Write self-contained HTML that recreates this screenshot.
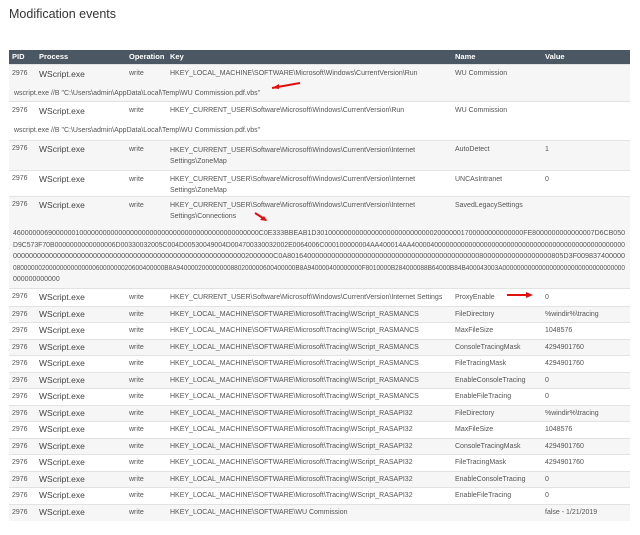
<!DOCTYPE html><html><head><style>
body{margin:0;background:#fff;font-family:"Liberation Sans",Arial,sans-serif;color:#555;width:640px;height:535px;overflow:hidden;position:relative}
h1{position:absolute;left:9px;top:7px;margin:0;font-size:12.5px;font-weight:normal;color:#333}
.hd{position:absolute;left:9px;top:50px;width:621px;height:14px;background:#4b5863;color:#fff;font-size:7.5px;font-weight:bold}
.r{position:absolute;left:9px;width:621px;border-top:1px solid #e2e2e2;font-size:7px}
.g{background:#f6f6f6}
.c{position:absolute;white-space:nowrap;line-height:16px}
.p{font-size:8.5px;color:#444}
.sub{position:absolute;left:5px;font-size:7px;line-height:11px;white-space:nowrap}
.hex{position:absolute;left:4px;top:31px;width:614px;font-size:7px;line-height:11.6px}
.hex div{white-space:nowrap;height:11.6px}
.hex span{display:inline-block;transform-origin:0 0}
</style></head><body>
<h1>Modification events</h1>
<div class="hd"><span class="c" style="left:3px;line-height:14px">PID</span><span class="c" style="left:30px;line-height:14px">Process</span><span class="c" style="left:120px;line-height:14px">Operation</span><span class="c" style="left:161px;line-height:14px">Key</span><span class="c" style="left:446px;line-height:14px">Name</span><span class="c" style="left:536px;line-height:14px">Value</span></div>

<div class="r g" style="top:64px;height:37px"><span class="c" style="left:3px;top:1px">2976</span><span class="c p" style="left:30px;top:1px">WScript.exe</span><span class="c" style="left:120px;top:1px">write</span><span class="c" style="left:161px;top:1px">HKEY_LOCAL_MACHINE\SOFTWARE\Microsoft\Windows\CurrentVersion\Run</span><span class="c" style="left:446px;top:1px">WU Commission</span><span class="sub" style="top:23px">wscript.exe //B "C:\Users\admin\AppData\Local\Temp\WU Commission.pdf.vbs"</span></div>
<svg style="position:absolute;left:270px;top:80px" width="32" height="10"><path d="M2 8 L30 3" stroke="#e01010" stroke-width="2"/><path d="M2 8 L9 4 L9 9Z" fill="#e01010"/></svg>

<div class="r" style="top:101px;height:39px"><span class="c" style="left:3px;top:1px">2976</span><span class="c p" style="left:30px;top:1px">WScript.exe</span><span class="c" style="left:120px;top:1px">write</span><span class="c" style="left:161px;top:1px">HKEY_CURRENT_USER\Software\Microsoft\Windows\CurrentVersion\Run</span><span class="c" style="left:446px;top:1px">WU Commission</span><span class="sub" style="top:23px">wscript.exe //B "C:\Users\admin\AppData\Local\Temp\WU Commission.pdf.vbs"</span></div>

<div class="r g" style="top:140px;height:30px"><span class="c" style="left:3px;top:0">2976</span><span class="c p" style="left:30px;top:0">WScript.exe</span><span class="c" style="left:120px;top:1px">write</span><span class="sub" style="left:161px;top:4px">HKEY_CURRENT_USER\Software\Microsoft\Windows\CurrentVersion\Internet<br>Settings\ZoneMap</span><span class="c" style="left:446px;top:1px">AutoDetect</span><span class="c" style="left:536px;top:1px">1</span></div>

<div class="r" style="top:170px;height:26px"><span class="c" style="left:3px;top:0">2976</span><span class="c p" style="left:30px;top:0">WScript.exe</span><span class="c" style="left:120px;top:1px">write</span><span class="sub" style="left:161px;top:3px">HKEY_CURRENT_USER\Software\Microsoft\Windows\CurrentVersion\Internet<br>Settings\ZoneMap</span><span class="c" style="left:446px;top:1px">UNCAsIntranet</span><span class="c" style="left:536px;top:1px">0</span></div>

<div class="r g" style="top:196px;height:92px"><span class="c" style="left:3px;top:0">2976</span><span class="c p" style="left:30px;top:0">WScript.exe</span><span class="c" style="left:120px;top:1px">write</span><span class="sub" style="left:161px;top:3px">HKEY_CURRENT_USER\Software\Microsoft\Windows\CurrentVersion\Internet<br>Settings\Connections</span><span class="c" style="left:446px;top:1px">SavedLegacySettings</span>
<div class="hex" id="hex"></div></div>
<svg style="position:absolute;left:253px;top:211px" width="16" height="12"><path d="M2 2 L13 9" stroke="#e01010" stroke-width="2"/><path d="M14 10 L7 9 L11 5Z" fill="#e01010"/></svg>

<div class="r" style="top:288px;height:18px"><span class="c" style="left:3px;top:0">2976</span><span class="c p" style="left:30px;top:0">WScript.exe</span><span class="c" style="left:120px;top:1px">write</span><span class="c" style="left:161px;top:1px">HKEY_CURRENT_USER\Software\Microsoft\Windows\CurrentVersion\Internet Settings</span><span class="c" style="left:446px;top:1px">ProxyEnable</span><span class="c" style="left:536px;top:1px">0</span></div>
<svg style="position:absolute;left:506px;top:291px" width="28" height="8"><path d="M1 4 L22 4" stroke="#e01010" stroke-width="2"/><path d="M27 4 L20 1 L20 7Z" fill="#e01010"/></svg>

<div id="rest"></div>
<script>
var L=["460000006900000010000000000000000000000000000000000000000000000C0E333BBEAB1D30100000000000000000000000000020000001700000000000000FE8000000000000007D6CB050",
"D9C573F70B0000000000000006D00330032005C004D00530049004D004700330032002E0064006C000100000004AA400014AA40000400000000000000000000000000000000000000000000000000",
"00000000000000000000000000000000000000000000000000000000002000000C0A801640000000000000000000000000000000000000000000800000000000000000805D3F009837400000",
"080000002000000000000006000000020600400000B8A940000200000000880200000600400000B8A940000400000000F8010000B284000088B64000B84B400043003A0000000000000000000000000000000000",
"000000000000"];
var hx=document.getElementById("hex");
for(var k=0;k<L.length;k++){var dv=document.createElement("div");var sp=document.createElement("span");sp.textContent=L[k];dv.appendChild(sp);hx.appendChild(dv);
if(k<4){var w=sp.getBoundingClientRect().width;sp.style.transform="scaleX("+(612/w)+")";}}
var d=[
["HKEY_LOCAL_MACHINE\\SOFTWARE\\Microsoft\\Tracing\\WScript_RASMANCS","FileDirectory","%windir%\\tracing"],
["HKEY_LOCAL_MACHINE\\SOFTWARE\\Microsoft\\Tracing\\WScript_RASMANCS","MaxFileSize","1048576"],
["HKEY_LOCAL_MACHINE\\SOFTWARE\\Microsoft\\Tracing\\WScript_RASMANCS","ConsoleTracingMask","4294901760"],
["HKEY_LOCAL_MACHINE\\SOFTWARE\\Microsoft\\Tracing\\WScript_RASMANCS","FileTracingMask","4294901760"],
["HKEY_LOCAL_MACHINE\\SOFTWARE\\Microsoft\\Tracing\\WScript_RASMANCS","EnableConsoleTracing","0"],
["HKEY_LOCAL_MACHINE\\SOFTWARE\\Microsoft\\Tracing\\WScript_RASMANCS","EnableFileTracing","0"],
["HKEY_LOCAL_MACHINE\\SOFTWARE\\Microsoft\\Tracing\\WScript_RASAPI32","FileDirectory","%windir%\\tracing"],
["HKEY_LOCAL_MACHINE\\SOFTWARE\\Microsoft\\Tracing\\WScript_RASAPI32","MaxFileSize","1048576"],
["HKEY_LOCAL_MACHINE\\SOFTWARE\\Microsoft\\Tracing\\WScript_RASAPI32","ConsoleTracingMask","4294901760"],
["HKEY_LOCAL_MACHINE\\SOFTWARE\\Microsoft\\Tracing\\WScript_RASAPI32","FileTracingMask","4294901760"],
["HKEY_LOCAL_MACHINE\\SOFTWARE\\Microsoft\\Tracing\\WScript_RASAPI32","EnableConsoleTracing","0"],
["HKEY_LOCAL_MACHINE\\SOFTWARE\\Microsoft\\Tracing\\WScript_RASAPI32","EnableFileTracing","0"],
["HKEY_LOCAL_MACHINE\\SOFTWARE\\WU Commission","","false - 1/21/2019"]];
var h="";
for(var i=0;i<d.length;i++){var t=306+i*16.46;
h+='<div class="r'+(i%2==0?' g':'')+'" style="top:'+t+'px;height:16.46px"><span class="c" style="left:3px;top:0">2976</span><span class="c p" style="left:30px;top:-1px">WScript.exe</span><span class="c" style="left:120px;top:0">write</span><span class="c" style="left:161px;top:0">'+d[i][0]+'</span><span class="c" style="left:446px;top:0">'+d[i][1]+'</span><span class="c" style="left:536px;top:0">'+d[i][2]+'</span></div>';}
document.getElementById("rest").innerHTML=h;
</script>
</body></html>
